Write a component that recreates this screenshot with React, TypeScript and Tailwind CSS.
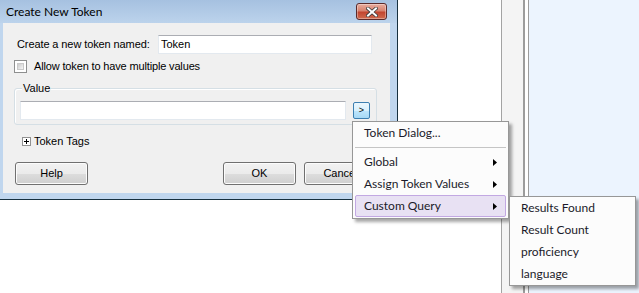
function Arrow() {
  return (
    <svg width="4" height="7" viewBox="0 0 4 7" className="shrink-0">
      <path d="M0 0 L4 3.5 L0 7 Z" fill="#000" />
    </svg>
  );
}

function WinButton({ label, className = '' }: { label: string; className?: string }) {
  return (
    <div
      className={`h-[23px] w-[73px] rounded-[3px] border border-[#707070] flex items-center justify-center text-black bg-[linear-gradient(#f2f2f2_0%,#ebebeb_50%,#dddddd_51%,#cfcfcf_100%)] shadow-[inset_0_0_0_1px_#fcfcfc] ${className}`}
    >
      {label}
    </div>
  );
}

function TextField({ value, width }: { value?: string; width: string }) {
  return (
    <div
      className={`h-[19px] ${width} shrink-0 bg-white border border-[#e3e9ef] border-t-[#abadb3] flex items-center px-[2px] text-black`}
    >
      {value}
    </div>
  );
}

function MenuItem({ label, arrow, active }: { label: string; arrow?: boolean; active?: boolean }) {
  return (
    <div className="h-[22px] px-[2px] flex">
      <div
        className={`flex-1 flex items-center pl-[8px] pr-[8px] rounded-[2px] border ${
          active ? 'border-[#c2a8e2] bg-[#e8e1f3]' : 'border-transparent'
        }`}
      >
        <span className="flex-1 whitespace-nowrap text-[#1b1b2a]">{label}</span>
        {arrow && <Arrow />}
      </div>
    </div>
  );
}

export default function App() {
  return (
    <div className="relative w-[639px] h-[293px] overflow-hidden bg-white flex font-['Segoe_UI','Lato',sans-serif] text-[12px] leading-none">
      {/* background panes */}
      <div className="w-[501px] h-full bg-white" />
      <div className="w-px h-full bg-[#a3a3a3]" />
      <div className="w-[21px] h-full bg-[#f4f4f4]" />
      <div className="w-[2px] h-full bg-[#9c9c9c]" />
      <div className="w-[3px] h-full bg-white" />
      <div className="w-px h-full bg-[#9c9c9c]" />
      <div className="flex-1 h-full bg-[#ecf4fe]" />

      {/* dialog window */}
      <div className="absolute left-0 top-0 w-[398px] h-[200px] border-r border-b border-[#17303f] bg-[#c0d6ee] flex flex-col">
        <div className="h-[23px] flex items-start bg-[linear-gradient(#a6c1e0,#bcd3ec)]">
          <span className="ml-[6px] mt-[6px] text-black">Create New Token</span>
          <div className="ml-auto mr-[10px] mt-[3px] w-[31px] h-[17px] rounded-[3px] border border-[#5b2a2a] bg-[linear-gradient(#e9ad9f_0%,#d7826f_45%,#c2452f_55%,#cf6a4e_100%)] flex items-center justify-center shadow-[inset_0_0_0_1px_rgba(255,255,255,0.35)]">
            <svg width="12" height="10" viewBox="0 0 12 10">
              <path d="M2 1.5 L10 8.5 M10 1.5 L2 8.5" stroke="#3a3a3a" strokeWidth="3.6" strokeLinecap="square" />
              <path d="M2 1.5 L10 8.5 M10 1.5 L2 8.5" stroke="#ffffff" strokeWidth="2" strokeLinecap="square" />
            </svg>
          </div>
        </div>
        <div className="ml-[3px] w-[387px] h-[170px] bg-[#f0f0f0] pt-[12px] pl-[11px] flex flex-col font-['Tahoma','Liberation_Sans',sans-serif] text-[11px]">
          <div className="h-[19px] flex items-center">
            <span className="w-[144px] shrink-0 pl-[3px] whitespace-nowrap text-black tracking-[-0.1px]">Create a new token named:</span>
            <TextField value="Token" width="w-[214px]" />
          </div>
          <div className="mt-[6px] h-[13px] flex items-center gap-[7px]">
            <div className="w-[13px] h-[13px] border border-[#8e8f8f] bg-white p-[2px]">
              <div className="w-full h-full bg-[linear-gradient(135deg,#cbcbcb,#f6f6f6)] border border-[#c9c9c9]" />
            </div>
            <span className="whitespace-nowrap text-black tracking-[-0.15px]">Allow token to have multiple values</span>
          </div>
          <div className="mt-[15px] relative w-[363px] h-[37px] border border-[#d5dfe5] rounded-[3px] shadow-[inset_1px_1px_0_#fff]">
            <span className="absolute left-[7px] top-[-6px] px-[1px] bg-[#f0f0f0] text-black">Value</span>
            <div className="mt-[12px] ml-[5px] flex items-start gap-[7px]">
              <TextField width="w-[326px]" />
              <div className="mt-[1px] w-[17px] h-[17px] rounded-[2px] border border-[#3c7fb1] bg-[linear-gradient(#eaf6fd_0%,#d9f0fc_50%,#bee6fd_51%,#a7d9f5_100%)] flex items-center justify-center text-[9px] text-black">
                &gt;
              </div>
            </div>
          </div>
          <div className="mt-[11px] ml-[8px] h-[11px] flex items-center gap-[3px]">
            <div className="w-[9px] h-[9px] border border-[#919191] bg-white flex items-center justify-center">
              <svg width="5" height="5" viewBox="0 0 5 5">
                <path d="M0 2.5 H5 M2.5 0 V5" stroke="#000" strokeWidth="1" />
              </svg>
            </div>
            <span className="whitespace-nowrap text-black">Token Tags</span>
          </div>
          <div className="mt-[15px] ml-[1px] flex">
            <WinButton label="Help" />
            <WinButton label="OK" className="ml-[135px]" />
            <WinButton label="Cancel" className="ml-[8px]" />
          </div>
        </div>
      </div>

      {/* context menu */}
      <div className="absolute left-[352px] top-[121px] w-[157px] border border-[#979797] bg-[#fcfcfc] pb-[1px] shadow-[3px_3px_3px_rgba(0,0,0,0.35)]">
        <MenuItem label="Token Dialog..." />
        <div className="h-[7px] flex items-center px-[2px]">
          <div className="w-full h-px bg-[#c5c5c5]" />
        </div>
        <MenuItem label="Global" arrow />
        <MenuItem label="Assign Token Values" arrow />
        <MenuItem label="Custom Query" arrow active />
      </div>

      {/* submenu */}
      <div className="absolute left-[509px] top-[196px] w-[127px] border border-[#979797] bg-[#fcfcfc] shadow-[3px_3px_3px_rgba(0,0,0,0.35)]">
        {['Results Found', 'Result Count', 'proficiency', 'language'].map((s) => (
          <div key={s} className="h-[22px] flex items-center pl-[11px] whitespace-nowrap text-[#1b1b2a]">
            {s}
          </div>
        ))}
      </div>
    </div>
  );
}
